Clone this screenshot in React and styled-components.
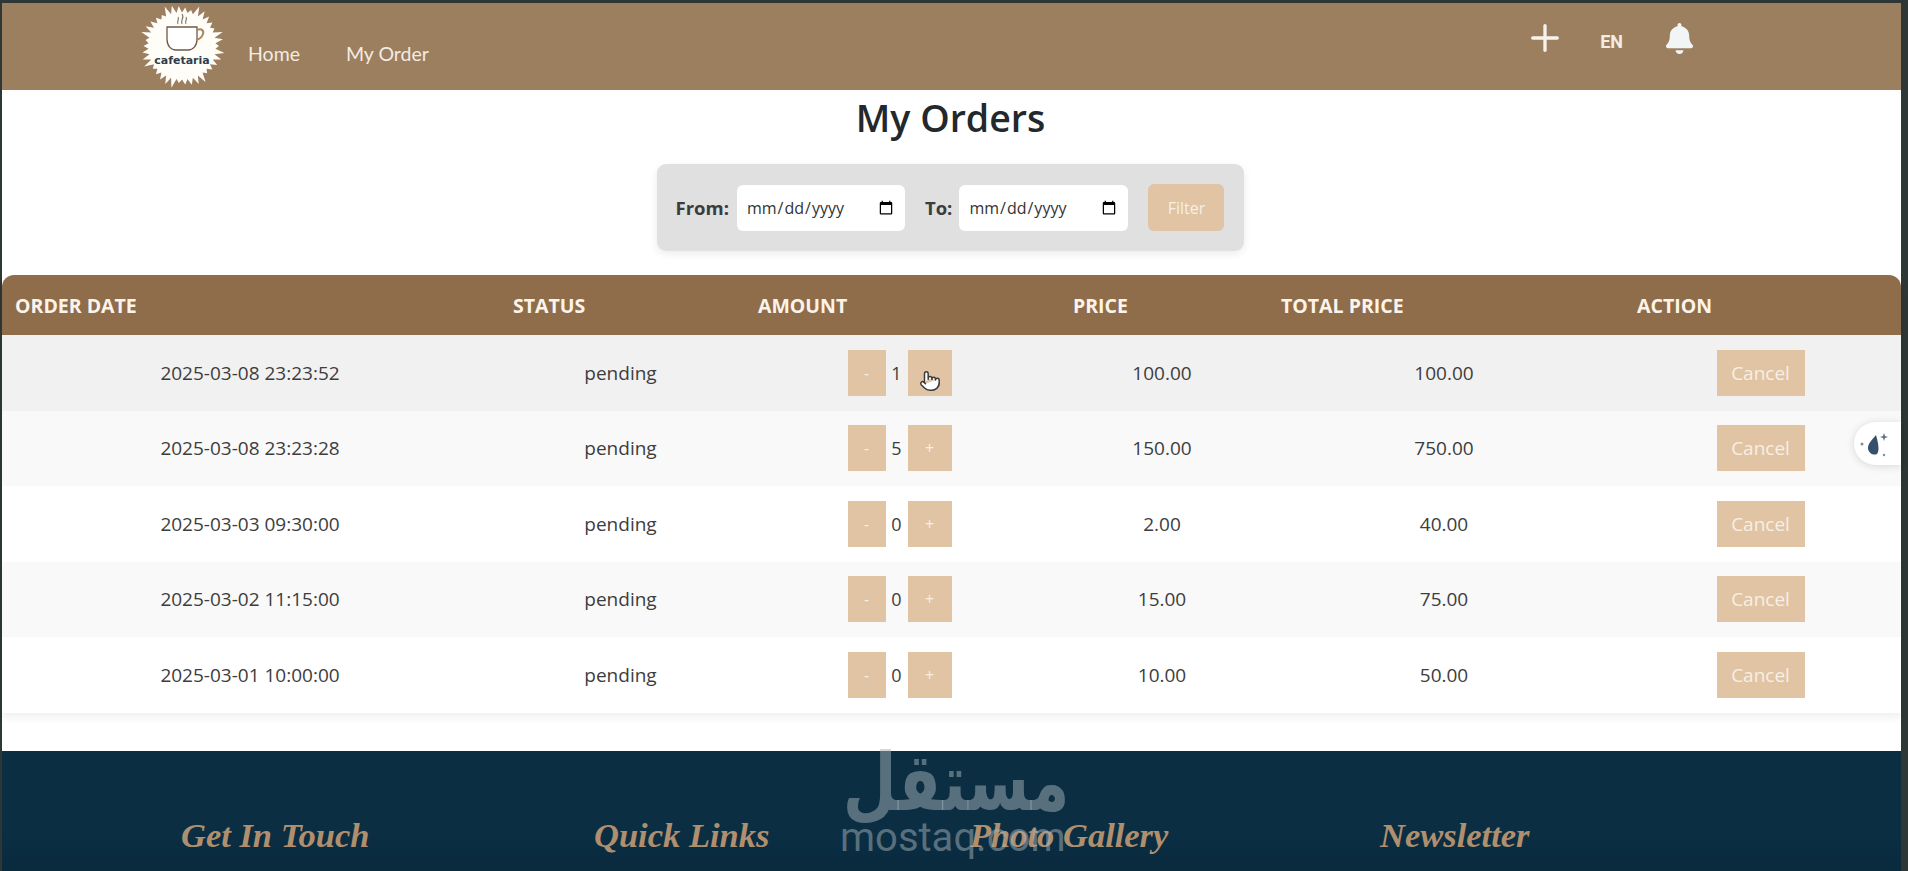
import React from "react";
import styled, { createGlobalStyle } from "styled-components";
import { FaBell } from "react-icons/fa";
import { Plus, Pointer } from "lucide-react";

const Global = createGlobalStyle`
  html, body { margin: 0; padding: 0; height: 100%; overflow: hidden; background: #2e3636; }
  * { box-sizing: border-box; }
`;

const Shell = styled.div`
  height: 871px;
  padding: 3px 7px 0 2px;
  overflow: hidden;
  background: #2e3636;
  font-family: "Open Sans", "Noto Sans", sans-serif;
`;
const Page = styled.div`
  position: relative;
  height: 868px;
  background: #fff;
  display: flex;
  flex-direction: column;
`;

const Navbar = styled.header`
  height: 87px;
  flex: none;
  background: #9c7f5f;
  display: flex;
  align-items: flex-start;
  padding-left: 139px;
`;
const LogoWrap = styled.div`
  width: 84px;
  height: 90px;
  margin-right: 23px;
  flex: none;
  position: relative;
  z-index: 1;
`;
const NavLinks = styled.nav`
  display: flex;
  gap: 46px;
  padding-top: 38px;
`;
const NavLink = styled.a`
  font-family: "Lato", sans-serif;
  font-size: 19.5px;
  line-height: 26px;
  color: #f3ece3;
`;
const NavActions = styled.div`
  margin-left: auto;
  margin-right: 206px;
  display: flex;
  align-items: center;
  height: 70px;
  color: #f6f3ee;
`;
const PlusBtn = styled.span`
  display: flex;
  margin-right: 34px;
`;
const Lang = styled.span`
  font-family: "Roboto", sans-serif;
  font-weight: 700;
  font-size: 18px;
  margin-right: 41px;
  padding-top: 6px;
  color: #f3ece3;
`;
const BellBtn = styled.span`
  display: flex;
  color: #f2f5f5;
`;

const Title = styled.h1`
  margin: 0;
  height: 74px;
  line-height: 56px;
  text-align: center;
  font-size: 37.5px;
  font-weight: 600;
  padding-right: 2px;
  color: #22282c;
`;

const FilterBar = styled.form`
  align-self: center;
  width: 587px;
  height: 87px;
  margin-right: 3px;
  background: #e0e0e0;
  border-radius: 9px;
  box-shadow: 0 3px 9px rgba(0, 0, 0, 0.08);
  display: flex;
  align-items: center;
  padding-left: 19px;
`;
const FilterLabel = styled.label`
  font-size: 18.5px;
  font-weight: 700;
  color: #3c3c3c;
  margin-right: ${(p) => p.$gap}px;
`;
const DateInput = styled.input`
  width: ${(p) => p.$w}px;
  height: 46px;
  border: none;
  border-radius: 6px;
  background: #fff;
  padding: 0 9px;
  margin-right: ${(p) => p.$gap}px;
  font-family: "Open Sans", sans-serif;
  font-size: 16px;
  color: #333;
`;
const FilterBtn = styled.button`
  width: 76px;
  height: 47px;
  margin-left: 1px;
  border: none;
  border-radius: 6px;
  background: #e0c4a4;
  color: #f7efe4;
  font-family: "Open Sans", sans-serif;
  font-size: 16px;
`;

const Table = styled.table`
  width: 100%;
  margin-top: 24px;
  table-layout: fixed;
  border-collapse: separate;
  border-spacing: 0;
  box-shadow: 0 4px 8px rgba(0, 0, 0, 0.07);
  border-radius: 12px 12px 0 0;
`;
const Col = styled.col`
  width: ${(p) => p.$w}px;
`;
const Th = styled.th`
  height: 60px;
  background: #8f6d4b;
  color: #fbf4ea;
  padding: 0 0 0 15px;
  text-align: left;
  font-size: 19.5px;
  font-weight: 700;
  &:first-child { border-top-left-radius: 12px; padding-left: 13px; }
  &:last-child { border-top-right-radius: 12px; }
`;
const Tr = styled.tr`
  background: ${(p) => p.$bg};
`;
const Td = styled.td`
  height: 75.5px;
  padding: 0;
  text-align: center;
  font-size: 19px;
  color: #3d3d3d;
`;
const Stepper = styled.div`
  position: relative;
  display: inline-flex;
  align-items: center;
  vertical-align: middle;
  margin-right: 2px;
`;
const StepBtn = styled.button`
  width: ${(p) => p.$w}px;
  height: 46px;
  border: none;
  padding: 0;
  background: #e0c4a4;
  color: #f7efe4;
  font-family: "Open Sans", sans-serif;
  font-size: 16px;
`;
const Amount = styled.span`
  width: 22px;
  font-size: 18px;
`;
const CancelBtn = styled.button`
  width: 88px;
  height: 46px;
  margin-right: 2px;
  border: none;
  background: #e0c4a4;
  color: #f7efe4;
  font-family: "Open Sans", sans-serif;
  font-size: 19px;
`;
const HandCursor = styled.span`
  position: absolute;
  left: 71px;
  top: 20px;
  display: flex;
  color: #3a3a3a;
`;

const Widget = styled.div`
  position: absolute;
  right: 0;
  top: 419px;
  width: 47px;
  height: 43px;
  border-radius: 22px 0 0 22px;
  background: #fff;
  box-shadow: 0 1px 8px rgba(0, 0, 0, 0.14);
  display: flex;
  align-items: center;
  justify-content: flex-start;
  padding-left: 3px;
`;

const Footer = styled.footer`
  position: relative;
  margin-top: 38px;
  flex: 1;
  background: linear-gradient(#0b2e42 70%, #0a2a3e);
  display: grid;
  grid-template-columns: 413px 376px 410px 1fr;
  padding: 62px 0 0 179px;
`;
const FooterTitle = styled.h3`
  margin: 0;
  font-family: "Liberation Serif", serif;
  font-style: italic;
  font-weight: 700;
  font-size: 34.5px;
  line-height: 44px;
  color: #b08f6f;
  white-space: nowrap;
`;
const Watermark = styled.div`
  position: absolute;
  left: 838px;
  top: -2px;
  width: 232px;
  color: rgba(165, 178, 186, 0.5);
  text-align: left;
  pointer-events: none;
`;
const WatermarkAr = styled.div`
  font-family: "DejaVu Sans", sans-serif;
  font-weight: 700;
  font-size: 62px;
  line-height: 68px;
  text-align: center;
  transform: scaleY(1.3);
`;
const WatermarkEn = styled.div`
  font-family: "Roboto", sans-serif;
  font-weight: 400;
  font-size: 40px;
  line-height: 42px;
`;

const Logo = () => {
  const pts = [];
  const n = 76;
  for (let i = 0; i < n; i++) {
    const a = (i / n) * Math.PI * 2;
    const spike = 37 + ((i * 7) % 5) * 1.5;
    const r = i % 2 === 0 ? spike : 33.5;
    pts.push(`${(41 + r * Math.cos(a)).toFixed(1)},${(43 + r * Math.sin(a)).toFixed(1)}`);
  }
  return (
    <svg width="84" height="90" viewBox="0 0 84 90">
      <polygon points={pts.join(" ")} fill="#fffdf8" />
      <path
        d="M26 24h30v12c0 7-4 11-9 11H35c-5 0-9-4-9-11z"
        fill="#fff"
        stroke="#6f5a48"
        strokeWidth="1.3"
      />
      <path d="M56 27c5-2 7 1 6 4s-3 5-7 6" fill="none" stroke="#a8875f" strokeWidth="2" />
      <path
        d="M37 21c-2-3 2-4 0-7M41 21c-2-4 3-6 0-10M45 21c-2-3 2-4 0-7"
        fill="none"
        stroke="#8a7a68"
        strokeWidth="1.2"
      />
      <text
        x="41"
        y="61"
        textAnchor="middle"
        fontFamily="DejaVu Sans, sans-serif"
        fontWeight="700"
        fontSize="11"
        fill="#2f3d4a"
      >
        cafetaria
      </text>
    </svg>
  );
};

const DropIcon = () => (
  <svg width="34" height="32" viewBox="0 0 34 32">
    <path d="M19 7c-3 4-8 8-8 13a6.500 6.500 0 0 0 9 6c3-3 1-12-1-19z" fill="#34506a" />
    <path d="M27 5l1 3 3 1-3 1-1 3-1-3-3-1 3-1z" fill="#5d7488" />
    <circle cx="5" cy="16" r="1.500" fill="#7d8f9e" />
    <circle cx="27" cy="27" r="1.200" fill="#7d8f9e" />
  </svg>
);

const rows = [
  ["2025-03-08 23:23:52", 1, "100.00", "100.00", "#f1f1f1"],
  ["2025-03-08 23:23:28", 5, "150.00", "750.00", "#f9f9f9"],
  ["2025-03-03 09:30:00", 0, "2.00", "40.00", "#ffffff"],
  ["2025-03-02 11:15:00", 0, "15.00", "75.00", "#f9f9f9"],
  ["2025-03-01 10:00:00", 0, "10.00", "50.00", "#ffffff"],
];

export default function App() {
  return (
    <Shell>
      <Global />
      <Page>
        <Navbar>
          <LogoWrap>
            <Logo />
          </LogoWrap>
          <NavLinks>
            <NavLink>Home</NavLink>
            <NavLink>My Order</NavLink>
          </NavLinks>
          <NavActions>
            <PlusBtn>
              <Plus size={42} strokeWidth={1.9} />
            </PlusBtn>
            <Lang>EN</Lang>
            <BellBtn>
              <FaBell size={31} />
            </BellBtn>
          </NavActions>
        </Navbar>

        <Title>My Orders</Title>

        <FilterBar>
          <FilterLabel $gap={8}>From:</FilterLabel>
          <DateInput type="date" $w={168} $gap={20} />
          <FilterLabel $gap={7}>To:</FilterLabel>
          <DateInput type="date" $w={169} $gap={19} />
          <FilterBtn type="button">Filter</FilterBtn>
        </FilterBar>

        <Table>
          <colgroup>
            <Col $w={496} />
            <Col $w={245} />
            <Col $w={315} />
            <Col $w={208} />
            <Col $w={356} />
            <Col $w={279} />
          </colgroup>
          <thead>
            <tr>
              <Th>ORDER DATE</Th>
              <Th>STATUS</Th>
              <Th>AMOUNT</Th>
              <Th>PRICE</Th>
              <Th>TOTAL PRICE</Th>
              <Th>ACTION</Th>
            </tr>
          </thead>
          <tbody>
            {rows.map(([date, amount, price, total, bg], i) => (
              <Tr key={date} $bg={bg}>
                <Td>{date}</Td>
                <Td>pending</Td>
                <Td>
                  <Stepper>
                    <StepBtn type="button" $w={38}>-</StepBtn>
                    <Amount>{amount}</Amount>
                    <StepBtn type="button" $w={44}>{i === 0 ? "" : "+"}</StepBtn>
                    {i === 0 && (
                      <HandCursor>
                        <Pointer size={22} fill="#fff" strokeWidth={1.6} />
                      </HandCursor>
                    )}
                  </Stepper>
                </Td>
                <Td>{price}</Td>
                <Td>{total}</Td>
                <Td>
                  <CancelBtn type="button">Cancel</CancelBtn>
                </Td>
              </Tr>
            ))}
          </tbody>
        </Table>

        <Widget>
          <DropIcon />
        </Widget>

        <Footer>
          <FooterTitle>Get In Touch</FooterTitle>
          <FooterTitle>Quick Links</FooterTitle>
          <FooterTitle>Photo Gallery</FooterTitle>
          <FooterTitle>Newsletter</FooterTitle>
          <Watermark>
            <WatermarkAr>مستقل</WatermarkAr>
            <WatermarkEn>mostaq.com</WatermarkEn>
          </Watermark>
        </Footer>
      </Page>
    </Shell>
  );
}
